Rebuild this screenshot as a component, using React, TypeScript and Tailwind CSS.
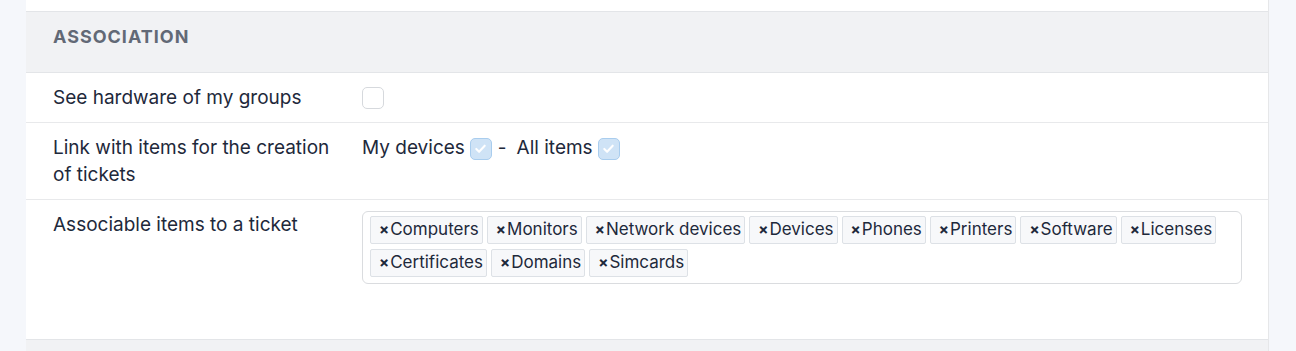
const items = [
  "Computers",
  "Monitors",
  "Network devices",
  "Devices",
  "Phones",
  "Printers",
  "Software",
  "Licenses",
  "Certificates",
  "Domains",
  "Simcards",
];

function Check({ checked }: { checked?: boolean }) {
  if (!checked) {
    return <span className="inline-block h-[22px] w-[22px] rounded-[5px] border border-[#d6d9dd] bg-white align-middle" />;
  }
  return (
    <span className="inline-flex h-[22px] w-[22px] items-center justify-center rounded-[5px] border border-[#a9cdee] bg-[#cfe3f6] align-middle">
      <svg width="15" height="15" viewBox="0 0 16 16" fill="none">
        <path d="M3.5 8.5l3 3 6-6.5" stroke="#fff" strokeWidth="2.2" strokeLinecap="round" strokeLinejoin="round" />
      </svg>
    </span>
  );
}

export default function App() {
  return (
    <div className="flex h-[351px] w-[1296px] bg-[#f5f7fb] font-['Inter',sans-serif] text-[#1e293b]">
      <div className="ml-[26px] flex w-[1243px] flex-col border-r border-[#e6e7e9] bg-white">
        <div className="h-[12px] shrink-0 border-b border-[#e3e5e8]" />
        <div className="h-[61px] shrink-0 border-b border-[#e3e5e8] bg-[#f1f2f4] pl-[27px] pt-[14px] text-[18px] font-bold leading-[22px] tracking-[0.055em] text-[#626976]">
          ASSOCIATION
        </div>
        <div className="flex h-[50px] shrink-0 items-center border-b border-[#e8e9eb] pt-[1px]">
          <div className="w-[336px] pl-[27px] text-[19px]">See hardware of my groups</div>
          <Check />
        </div>
        <div className="flex h-[77px] shrink-0 items-start border-b border-[#e8e9eb] pt-[11px]">
          <div className="w-[336px] pl-[27px] pr-4 text-[19px] leading-[27px]">
            Link with items for the creation of tickets
          </div>
          <div className="flex items-center text-[19px] leading-[27px]">
            <span>My devices</span>
            <span className="ml-[5px]"><Check checked /></span>
            <span className="ml-[6px] mr-[10px]">-</span>
            <span>All items</span>
            <span className="ml-[5px]"><Check checked /></span>
          </div>
        </div>
        <div className="flex h-[140px] shrink-0 items-start border-b border-[#e3e5e8] pt-[11px]">
          <div className="w-[336px] pl-[27px] text-[19px] leading-[27px]">Associable items to a ticket</div>
          <div className="flex h-[73px] w-[880px] flex-wrap content-start gap-x-[4px] gap-y-[5px] rounded-[6px] border border-[#dadcdf] px-[7px] pt-[4px]">
            {items.map((it) => (
              <span
                key={it}
                className="flex h-[28px] items-center rounded-[2px] border border-[#dde1e6] bg-[#f7f8fa] pl-[8px] pr-[3px] text-[17px] text-[#1e293b]"
              >
                <span className="mr-[1px] text-[15px] font-bold">×</span>
                {it}
              </span>
            ))}
          </div>
        </div>
        <div className="flex-1 bg-[#f1f2f4]" />
      </div>
    </div>
  );
}
